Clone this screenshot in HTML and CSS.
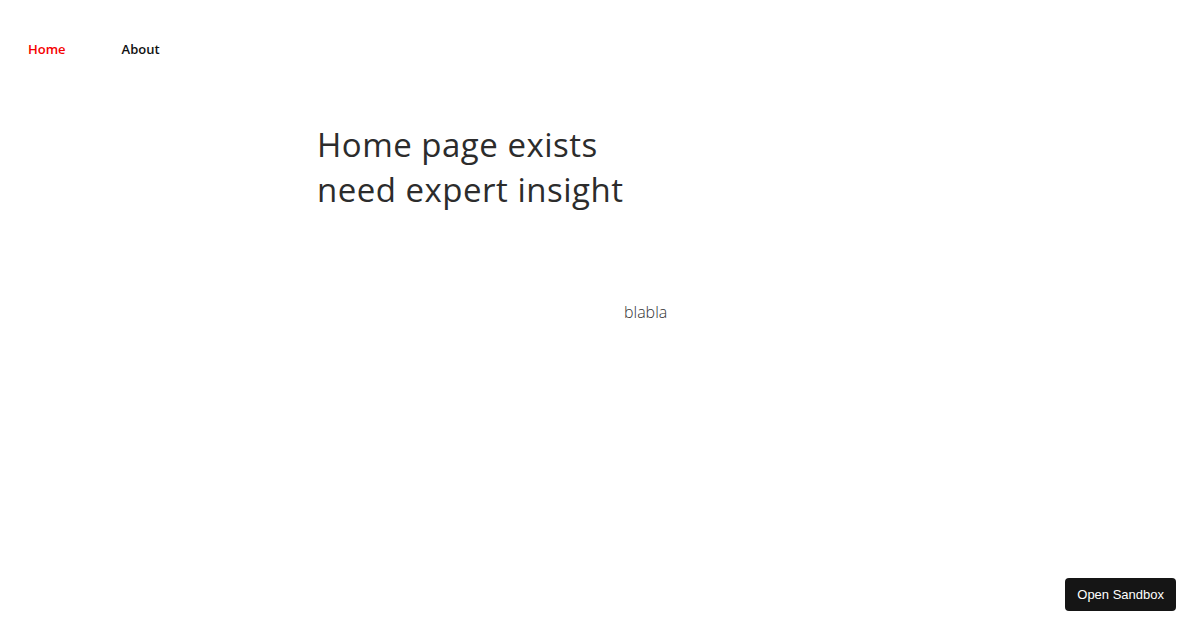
FILE: index.html
```html
<!DOCTYPE html>
<html lang="en">
<head>
<meta charset="utf-8">
<title>Home</title>
<link rel="stylesheet" href="styles.css">
</head>
<body>
  <nav class="nav">
    <a class="nav-link active" href="#">Home</a>
    <a class="nav-link" href="#">About</a>
  </nav>
  <main class="main">
    <h1 class="title">Home page exists<br>need expert insight</h1>
    <p class="text">blabla</p>
  </main>
  <a class="sandbox-btn" href="#">Open Sandbox</a>
</body>
</html>
```

FILE: styles.css
```css
* { box-sizing: border-box; }
html, body { margin: 0; padding: 0; background: #fff; }
body {
  font-family: "Open Sans", "DejaVu Sans", sans-serif;
  width: 1200px;
  height: 630px;
  overflow: hidden;
}
.nav {
  display: flex;
  gap: 56px;
  padding: 40px 28px 0;
}
.nav-link {
  font-size: 13px;
  font-weight: 600;
  color: #111;
  text-decoration: none;
  line-height: 18px;
}
.nav-link.active { color: #f50000; }
.main {
  padding-left: 317px;
  padding-top: 64px;
}
.title {
  margin: 0;
  font-size: 33px;
  font-weight: 500;
  line-height: 45px;
  color: #2c2c2c;
  letter-spacing: 0.5px;
}
.text {
  margin: 89px 0 0 307px;
  font-size: 16px;
  font-weight: 300;
  color: #333;
}
.sandbox-btn {
  position: fixed;
  right: 24px;
  bottom: 19px;
  height: 33px;
  padding: 0 12px;
  display: flex;
  align-items: center;
  background: #151515;
  color: #fff;
  border-radius: 4px;
  font-family: "Liberation Sans", Arial, sans-serif;
  font-size: 13px;
  text-decoration: none;
}
```
